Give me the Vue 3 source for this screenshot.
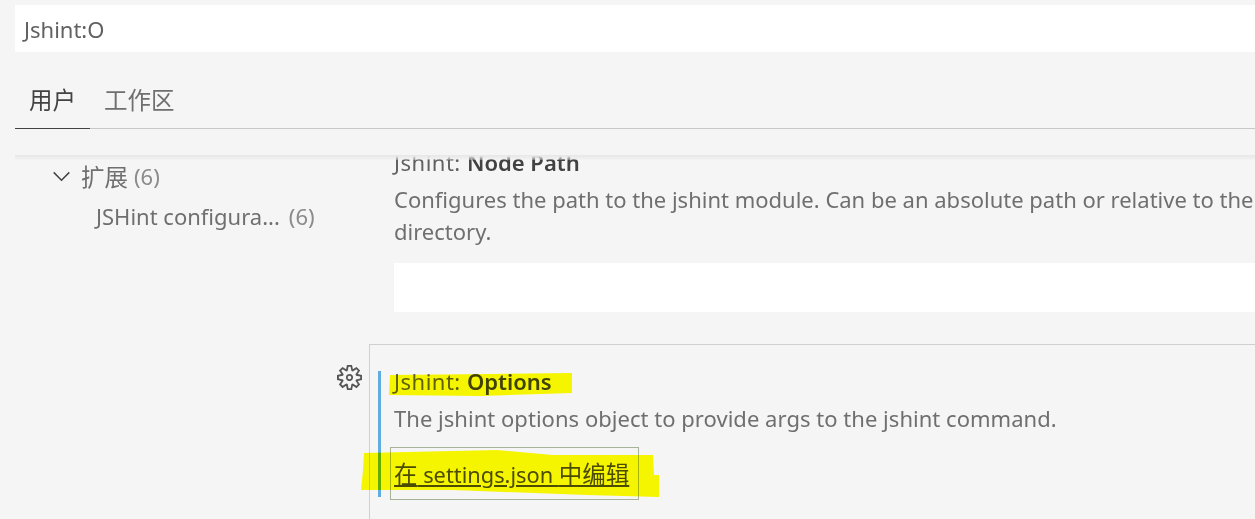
<script setup>
const gear = 'M19.85 8.75l4.15.83v4.84l-4.15.83 2.35 3.52-3.43 3.43-3.52-2.35-.83 4.15H9.58l-.83-4.15-3.52 2.35-3.43-3.43 2.35-3.52L0 14.42V9.58l4.15-.83L1.8 5.23 5.23 1.8l3.52 2.35L9.58 0h4.84l.83 4.15 3.52-2.35 3.43 3.43-2.35 3.52zm-1.57 5.07l4-.81v-2l-4-.81-.54-1.3 2.29-3.43-1.43-1.43-3.43 2.29-1.3-.54-.81-4h-2l-.81 4-1.3.54-3.43-2.29-1.43 1.43L6.38 8.9l-.54 1.3-4 .81v2l4 .81.54 1.3-2.29 3.43 1.43 1.43 3.43-2.29 1.3.54.81 4h2l.81-4 1.3-.54 3.43 2.29 1.43-1.43-2.29-3.43.54-1.3zm-8.186-4.672A3.43 3.43 0 0 1 12 8.57 3.44 3.44 0 0 1 15.43 12a3.43 3.43 0 1 1-5.336-2.852zm.956 4.274c.281.188.612.288.95.288A1.7 1.7 0 0 0 13.71 12a1.71 1.71 0 1 0-2.66 1.422z'
</script>

<template>
  <div class="page">
    <div class="search">Jshint:O</div>
    <div class="tabs">
      <div class="tab active">用户</div>
      <div class="tab">工作区</div>
    </div>
    <div class="body">
      <div class="shadow"></div>
      <aside class="tree">
        <div class="group">
          <svg class="chevron" viewBox="0 0 20 12"><path d="M1.5 1.5 10 10l8.5-8.5" fill="none" stroke="#424242" stroke-width="1.6" /></svg>
          <span class="label cjk">扩展</span>
          <span class="count">(6)</span>
        </div>
        <div class="leaf">
          <span class="label">JSHint configura...</span>
          <span class="count">(6)</span>
        </div>
      </aside>
      <main class="content">
        <section class="setting first">
          <div class="title"><span class="cat">Jshint: </span><b>Node Path</b></div>
          <p class="desc">Configures the path to the jshint module. Can be an absolute path or relative to the<br />directory.</p>
          <div class="input"></div>
        </section>
        <section class="card">
          <svg class="gear" viewBox="0 0 24 24"><path :d="gear" fill="#555555" fill-rule="evenodd" /></svg>
          <div class="bar">
            <div class="title"><span class="cat">Jshint: </span><b>Options</b></div>
            <p class="desc">The jshint options object to provide args to the jshint command.</p>
            <a class="edit"><span class="cjk">在</span> settings.json <span class="cjk">中编辑</span></a>
          </div>
        </section>
      </main>
    </div>
    <svg class="marker" viewBox="0 0 1255 519" width="1255" height="519">
      <path d="M390 375 490 374 572 373 572 393 480 396 389 395Z" fill="#ffff00" />
      <path d="M364 453 497 450 553 455 653 455 654 475 659 475 659 497 587 495 453 490 361 490 363 470Z" fill="#ffff00" />
    </svg>
  </div>
</template>

<style>
html, body { margin: 0; background: #f5f5f5; }
</style>

<style scoped>
.page {
  position: relative;
  width: 1255px;
  height: 519px;
  overflow: hidden;
  background: #f5f5f5;
  padding-top: 5px;
  box-sizing: border-box;
  font-family: "Noto Sans", "Noto Sans CJK SC", sans-serif;
  color: #6f6f6f;
  font-size: 22px;
}
.cjk { font-size: 23.5px; }
.search {
  margin-left: 15px;
  height: 47px;
  line-height: 49px;
  padding-left: 9px;
  background: #fff;
  color: #616161;
}
.tabs {
  display: flex;
  height: 77px;
  margin-left: 15px;
  border-bottom: 1px solid #c8c8c8;
  box-sizing: border-box;
}
.tab {
  padding: 0 14px;
  line-height: 96px;
  font-size: 23.5px;
  color: #6f6f6f;
}
.tab.active {
  color: #424242;
  border-bottom: 1px solid #424242;
  margin-bottom: -1px;
}
.body {
  position: relative;
  display: flex;
  margin-top: 26px;
  margin-left: 15px;
  height: 364px;
  overflow: hidden;
}
.shadow {
  position: absolute;
  left: 0;
  right: 0;
  top: 0;
  height: 5px;
  background: linear-gradient(#e7e7e7 0, #e9e9e9 1px, rgba(240, 240, 240, 0.3) 5px);
  z-index: 2;
}
.tree {
  width: 354px;
  flex: none;
  padding-top: 1px;
  box-sizing: border-box;
}
.group {
  display: flex;
  align-items: center;
  height: 40px;
  padding-left: 37px;
}
.chevron { width: 19px; height: 11px; margin-right: 10px; }
.group .count { margin-left: 6px; }
.leaf {
  display: flex;
  align-items: center;
  height: 40px;
  padding-left: 81px;
}
.leaf .count { margin-left: 9px; }
.count { color: #8b8b8b; }
.content { flex: 1; min-width: 0; }
.setting.first { padding-left: 25px; margin-top: -9px; white-space: nowrap; }
.title { line-height: 32px; color: #616161; }
.cat { letter-spacing: 0.5px; }
.title b { font-weight: 600; color: #424242; }
.desc { margin: 5px 0 0; line-height: 32px; color: #6f6f6f; }
.input { margin-top: 16px; height: 49px; background: #fff; }
.card {
  position: relative;
  margin-top: 32px;
  border-top: 1px solid #d0d0d0;
  border-left: 1px solid #d0d0d0;
  padding: 26px 0 0 8px;
  height: 175px;
  box-sizing: border-box;
}
.gear { position: absolute; left: -33px; top: 20px; width: 25px; height: 25px; }
.bar {
  border-left: 3px solid #62ade0;
  padding-left: 13px;
  height: 126px;
  box-sizing: border-box;
}
.bar .title { line-height: 20px; }
.bar .desc { margin-top: 11px; letter-spacing: 0.03px; }
.edit {
  display: block;
  width: fit-content;
  margin: 13px 0 0 -4px;
  padding: 0 9px 0 3px;
  height: 53px;
  line-height: 52px;
  border: 1px solid #a6b398;
  box-sizing: border-box;
  text-decoration: underline;
  font-size: 21.8px;
  color: #4c4c4c;
  white-space: nowrap;
}
.marker { position: absolute; left: 0; top: 0; mix-blend-mode: multiply; pointer-events: none; }
</style>
